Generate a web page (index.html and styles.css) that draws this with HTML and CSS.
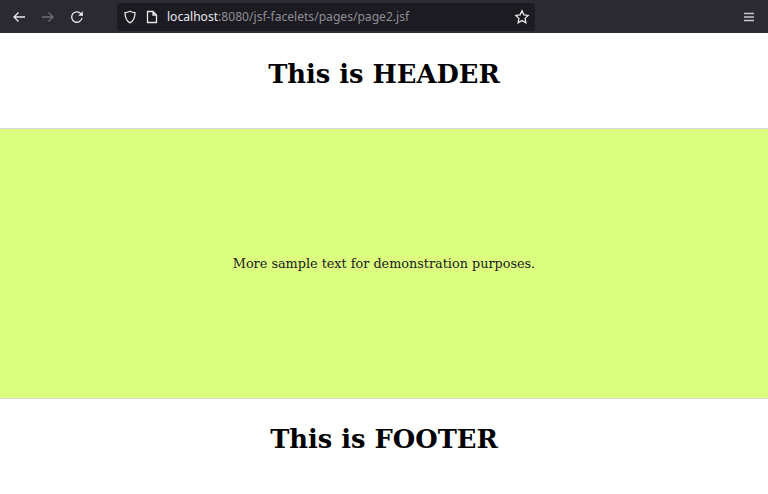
FILE: index.html
```html
<!DOCTYPE html>
<html lang="en">
<head>
    <meta charset="UTF-8">
    <title>JSF Facelets</title>
    <link rel="stylesheet" href="styles.css">
</head>
<body>

    <div class="toolbar">
        <div class="nav-button">
            <svg width="16" height="16" viewBox="0 0 16 16"><path d="M14 8H3M7.500 3.500 3 8l4.500 4.500" class="icon-line"/></svg>
        </div>
        <div class="nav-button nav-disabled">
            <svg width="16" height="16" viewBox="0 0 16 16"><path d="M2 8h11M8.500 3.500 13 8l-4.500 4.500" class="icon-line"/></svg>
        </div>
        <div class="nav-button">
            <svg width="16" height="16" viewBox="0 0 16 16"><path d="M13 9a5.200 5.200 0 1 1-1.200-4.400L13.500 6.500" class="icon-line"/><path d="M13.800 2.200v4.600H9.200z" class="icon-fill"/></svg>
        </div>
        <div class="url-bar">
            <svg class="url-icon" width="16" height="16" viewBox="0 0 16 16"><path d="M8 2.200c1.800 1 3.400 1.400 5 1.400 0 5-1.200 8.400-5 10.200C4.200 12 3 8.600 3 3.600c1.600 0 3.200-.4 5-1.400z" class="icon-line"/></svg>
            <svg class="url-icon" width="16" height="16" viewBox="0 0 16 16"><path d="M3.500 2.500h5.500l3.500 3.500v7.500h-9zM9 2.500V6h3.500" class="icon-line"/></svg>
            <span class="url-text"><span class="url-host">localhost</span>:8080/jsf-facelets/pages/page2.jsf</span>
            <svg class="url-star" width="16" height="16" viewBox="0 0 16 16"><path d="m8 1.800 1.900 4 4.300.6-3.100 3 .8 4.300L8 11.600l-3.900 2.100.8-4.300-3.100-3 4.300-.6z" class="icon-line"/></svg>
        </div>
        <div class="menu-button">
            <svg width="16" height="16" viewBox="0 0 16 16"><path d="M3 4.500h10M3 8h10M3 11.500h10" class="icon-line"/></svg>
        </div>
    </div>

    <div class="header">
        <h1>This is HEADER</h1>
    </div>

    <div class="content">
        <p>More sample text for demonstration purposes.</p>
    </div>

    <div class="footer">
        <h1>This is FOOTER</h1>
    </div>

</body>
</html>
```

FILE: styles.css
```css
body {
    margin: 0;
    padding: 0;
    height: 494px;
    overflow: hidden;
    background-color: #fff;
    font-family: "DejaVu Serif", serif;
    color: #1a1a1a;
}

.toolbar {
    display: flex;
    align-items: center;
    height: 33px;
    padding-left: 4px;
    box-sizing: border-box;
    background-color: #2b2a33;
}

.nav-button {
    display: flex;
    justify-content: center;
    align-items: center;
    width: 29px;
    height: 33px;
    color: #e8e8ec;
}

.nav-disabled {
    color: #6f6e76;
}

.icon-line {
    fill: none;
    stroke: currentColor;
    stroke-width: 1.3;
}

.icon-fill {
    fill: currentColor;
}

.url-bar {
    display: flex;
    align-items: center;
    width: 418px;
    height: 28px;
    margin-left: 26px;
    padding: 0 5px;
    box-sizing: border-box;
    border-radius: 4px;
    background-color: #1c1b22;
    color: #e8e8ec;
}

.url-icon {
    margin-right: 6px;
}

.url-text {
    flex: 1;
    margin-left: 1px;
    font-family: "Noto Sans", sans-serif;
    font-size: 12.1px;
    color: #8f8f95;
    white-space: nowrap;
}

.url-host {
    color: #e8e8ec;
}

.menu-button {
    display: flex;
    margin-left: auto;
    margin-right: 11px;
    color: #c8c8d0;
}

.header {
    display: flex;
    justify-content: center;
    align-items: center;
    height: 82px;
    padding-bottom: 13px;
    border-bottom: 1px solid #d8d8d8;
    color: #000;
}

.header h1,
.footer h1 {
    margin: 0;
    font-size: 25.75px;
    font-weight: bold;
}

.content {
    display: flex;
    justify-content: center;
    align-items: center;
    height: 269px;
    box-sizing: border-box;
    background-color: #dcff80;
    font-size: 12.8px;
}

.content p {
    margin: 0;
}

.footer {
    display: flex;
    justify-content: center;
    height: 95px;
    padding-top: 25px;
    box-sizing: border-box;
    border-top: 1px solid #d8d8d8;
    color: #000;
}
```
